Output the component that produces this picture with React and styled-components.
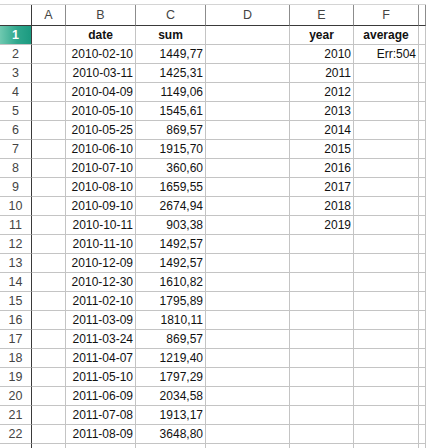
import React from "react";
import styled, { createGlobalStyle, css } from "styled-components";

const Global = createGlobalStyle`
  html, body { margin: 0; padding: 0; background: #fff; }
  body { font-family: "Liberation Sans", Arial, sans-serif; }
`;

const Sheet = styled.div`
  display: grid;
  grid-template-columns: 32px 34px 70px 70px 84px 64px 65px 1fr;
  grid-template-rows: 5px 21px repeat(23, 19px);
  width: 426px;
  height: 448px;
  overflow: hidden;
  font-size: 12px;
  color: #111;
`;

const TopStrip = styled.div`
  grid-column: 1 / -1;
  border-bottom: 1px solid #d4d4d4;
  background: #fff;
`;

const ColHead = styled.div`
  box-sizing: border-box;
  border-right: 1px solid ${(p) => (p.$corner ? "#3a3a3a" : "#8c8c8c")};
  border-bottom: 1px solid #3a3a3a;
  background: #fff;
  color: #444;
  display: flex;
  align-items: center;
  justify-content: center;
  font-size: 12.5px;
`;

const RowHead = styled.div`
  box-sizing: border-box;
  border-right: 1px solid #3a3a3a;
  border-bottom: 1px solid #c4c4c4;
  display: flex;
  align-items: center;
  justify-content: center;
  color: #444;
  font-size: 12.5px;
  ${(p) =>
    p.$selected
      ? css`
          background: linear-gradient(90deg, #6fc9b0 0%, #2fa78d 55%, #1b9a80 100%);
          color: #fff;
          font-weight: bold;
        `
      : css`
          background: #fff;
        `}
`;

const Cell = styled.div`
  box-sizing: border-box;
  border-right: 1px solid #c4c4c4;
  border-bottom: 1px solid #c4c4c4;
  display: flex;
  align-items: center;
  padding: 0 2px;
  white-space: nowrap;
  overflow: hidden;
  justify-content: ${(p) =>
    p.$align === "center" ? "center" : p.$align === "right" ? "flex-end" : "flex-start"};
  font-weight: ${(p) => (p.$bold ? "bold" : "normal")};
`;

const data = [
  ["2010-02-10", "1449,77", "2010", "Err:504"],
  ["2010-03-11", "1425,31", "2011"],
  ["2010-04-09", "1149,06", "2012"],
  ["2010-05-10", "1545,61", "2013"],
  ["2010-05-25", "869,57", "2014"],
  ["2010-06-10", "1915,70", "2015"],
  ["2010-07-10", "360,60", "2016"],
  ["2010-08-10", "1659,55", "2017"],
  ["2010-09-10", "2674,94", "2018"],
  ["2010-10-11", "903,38", "2019"],
  ["2010-11-10", "1492,57"],
  ["2010-12-09", "1492,57"],
  ["2010-12-30", "1610,82"],
  ["2011-02-10", "1795,89"],
  ["2011-03-09", "1810,11"],
  ["2011-03-24", "869,57"],
  ["2011-04-07", "1219,40"],
  ["2011-05-10", "1797,29"],
  ["2011-06-09", "2034,58"],
  ["2011-07-08", "1913,17"],
  ["2011-08-09", "3648,80"],
  null,
];

const letters = ["A", "B", "C", "D", "E", "F", ""];

export default function App() {
  return (
    <>
      <Global />
      <Sheet>
        <TopStrip />
        <ColHead $corner />
        {letters.map((l, i) => (
          <ColHead key={i}>{l}</ColHead>
        ))}
        <RowHead $selected>1</RowHead>
        <Cell />
        <Cell $align="center" $bold>date</Cell>
        <Cell $align="center" $bold>sum</Cell>
        <Cell />
        <Cell $align="center" $bold>year</Cell>
        <Cell $align="center" $bold>average</Cell>
        <Cell />
        {data.map((r, i) => (
          <React.Fragment key={i}>
            <RowHead>{r ? i + 2 : ""}</RowHead>
            <Cell />
            <Cell $align="right">{r && r[0]}</Cell>
            <Cell $align="right">{r && r[1]}</Cell>
            <Cell />
            <Cell $align="right">{r && r[2]}</Cell>
            <Cell $align="right">{r && r[3]}</Cell>
            <Cell />
          </React.Fragment>
        ))}
      </Sheet>
    </>
  );
}
